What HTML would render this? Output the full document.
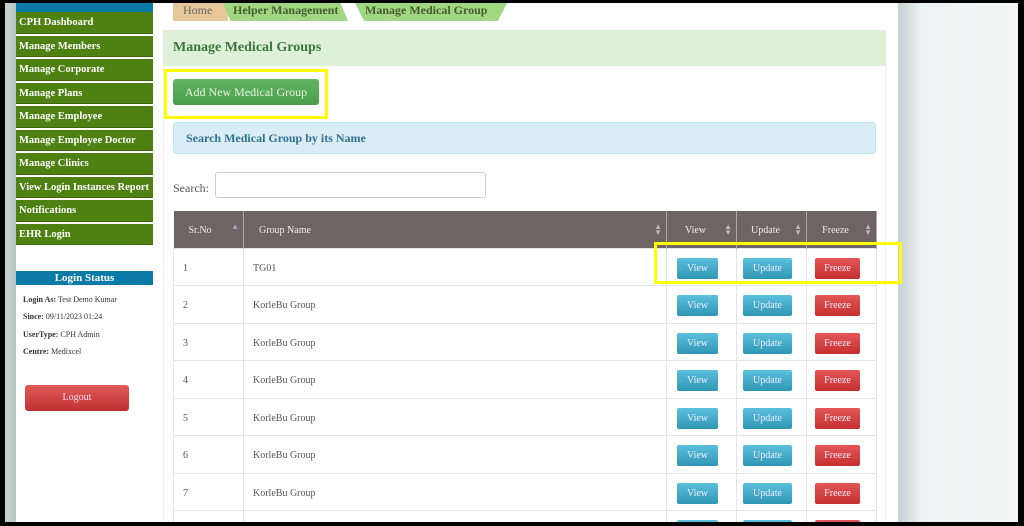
<!DOCTYPE html>
<html><head><style>
*{box-sizing:border-box;margin:0;padding:0}
body{width:1024px;height:526px;background:#000;position:relative;overflow:hidden;font-family:"Liberation Serif",serif}
.page{position:absolute;left:5px;top:3px;width:1013px;height:519px;background:#fff;overflow:hidden}
.lstrip{position:absolute;left:0;top:0;width:11px;height:100%;background:linear-gradient(90deg,#c9d3d3,#b8c6c6)}
.rarea{position:absolute;left:893px;top:0;width:120px;height:100%;background:linear-gradient(90deg,#c5d1d1,#eef1f1 20%,#f4f6f6)}
.sb{position:absolute;left:11px;top:0;width:137px}
.ql{height:9px;background:#0a7ba6}
.sb a{display:block;background:#4f8012;color:#fff;font-weight:bold;font-size:10.5px;height:21.5px;line-height:21px;padding-left:3px;margin-bottom:2px;border-bottom:1px solid #3c650c}
.ls{position:absolute;left:11px;top:268px;width:137px;height:14px;background:#0a7ba6;color:#fff;font-weight:bold;text-align:center;font-size:11px;line-height:14px}
.info{position:absolute;left:18px;font-size:8px;color:#333}
.logout{position:absolute;left:20px;top:382px;width:104px;height:26px;background:linear-gradient(#e05a5a,#c03030);border-radius:3px;color:#fde;text-align:center;font-size:10px;line-height:26px}
.bc{position:absolute;top:0;height:18px;font-weight:bold;font-size:12px;color:#4a5a30;line-height:14px;padding-left:10px}
.panel{position:absolute;left:158px;top:27px;width:723px;height:500px;border:1px solid #eee;border-top:none}
.ph{position:absolute;left:158px;top:27px;width:723px;height:36px;background:#dff0d8;color:#3c763d;font-weight:bold;font-size:14px;line-height:36px;padding-left:10px}
.hl{position:absolute;border:3px solid #ffff00}
.addbtn{position:absolute;left:168px;top:76px;width:146px;height:26px;background:linear-gradient(#62b462,#4a9e4a);border-radius:3px;color:#e8f5e0;font-size:12px;text-align:center;line-height:26px}
.srch{position:absolute;left:168px;top:119px;width:703px;height:32px;background:#d9edf7;border:1px solid #bce8f1;border-radius:3px;color:#31708f;font-weight:bold;font-size:12px;line-height:30px;padding-left:12px}
.sl{position:absolute;left:168px;top:178px;font-size:12px;color:#555}
.si{position:absolute;left:210px;top:169px;width:271px;height:26px;border:1px solid #ccc;border-radius:3px}
table{position:absolute;left:168px;top:208px;border-collapse:collapse;font-size:10px;color:#555}
th{background:#6e6464;color:#eee;font-weight:normal;height:37px;border-right:1px solid #aaa;position:relative;text-align:left;padding-left:15px;padding-top:3px}
th.c{text-align:center;padding-left:0;padding-right:12px}
th .s{position:absolute;right:4px;top:13px;color:#bbb;font-size:8px;line-height:6px}
td{height:37.5px;border:1px solid #e4e4e4;padding-left:9px;padding-top:3px}
td.c{text-align:center;padding:3px 8px 0 0}
.b{display:inline-block;width:41px;height:21px;line-height:21px;color:#eef;border-radius:2px;font-size:10px}
.v{background:linear-gradient(#5bc0de,#2f96b4)}
.u{width:49px}
.f{background:linear-gradient(#e45656,#c53030);width:45px}
</style></head><body><div class="page">
<div class="lstrip"></div><div class="rarea"></div>
<div class="sb"><div class="ql"></div>
<a>CPH Dashboard</a><a>Manage Members</a><a>Manage Corporate</a><a>Manage Plans</a><a>Manage Employee</a><a>Manage Employee Doctor</a><a>Manage Clinics</a><a>View Login Instances Report</a><a>Notifications</a><a>EHR Login</a></div>
<div class="ls">Login Status</div>
<div class="info" style="top:292px"><b>Login As:</b> Test Demo Kumar</div>
<div class="info" style="top:309px"><b>Since:</b> 09/11/2023 01:24</div>
<div class="info" style="top:327px"><b>UserType:</b> CPH Admin</div>
<div class="info" style="top:344px"><b>Centre:</b> Medixcel</div>
<div class="logout">Logout</div>
<div class="bc" style="left:168px;width:55px;background:#e8c89a;font-weight:normal;color:#666">Home</div>
<div class="bc" style="left:218px;width:125px;background:#9fd880;clip-path:polygon(0 0,94% 0,100% 100%,6% 100%)">Helper Management</div>
<div class="bc" style="left:350px;width:152px;background:#9fd880;clip-path:polygon(0 0,96% 0,100% 0,94% 100%,6% 100%)">Manage Medical Group</div>
<div class="panel"></div>
<div class="ph">Manage Medical Groups</div>
<div class="hl" style="left:159px;top:66px;width:164px;height:50px"></div>
<div class="addbtn">Add New Medical Group</div>
<div class="srch">Search Medical Group by its Name</div>
<div class="sl">Search:</div><div class="si"></div>
<table>
<tr><th style="width:70px">Sr.No<span class="s" style="color:#9ac">▲</span></th><th style="width:423px">Group Name<span class="s">▲<br>▼</span></th><th class="c" style="width:70px">View<span class="s">▲<br>▼</span></th><th class="c" style="width:70px">Update<span class="s">▲<br>▼</span></th><th class="c" style="width:70px">Freeze<span class="s">▲<br>▼</span></th></tr>
<tr><td>1</td><td>TG01</td><td class="c"><span class="b v">View</span></td><td class="c"><span class="b v u">Update</span></td><td class="c"><span class="b f">Freeze</span></td></tr>
<tr><td>2</td><td>KorleBu Group</td><td class="c"><span class="b v">View</span></td><td class="c"><span class="b v u">Update</span></td><td class="c"><span class="b f">Freeze</span></td></tr>
<tr><td>3</td><td>KorleBu Group</td><td class="c"><span class="b v">View</span></td><td class="c"><span class="b v u">Update</span></td><td class="c"><span class="b f">Freeze</span></td></tr>
<tr><td>4</td><td>KorleBu Group</td><td class="c"><span class="b v">View</span></td><td class="c"><span class="b v u">Update</span></td><td class="c"><span class="b f">Freeze</span></td></tr>
<tr><td>5</td><td>KorleBu Group</td><td class="c"><span class="b v">View</span></td><td class="c"><span class="b v u">Update</span></td><td class="c"><span class="b f">Freeze</span></td></tr>
<tr><td>6</td><td>KorleBu Group</td><td class="c"><span class="b v">View</span></td><td class="c"><span class="b v u">Update</span></td><td class="c"><span class="b f">Freeze</span></td></tr>
<tr><td>7</td><td>KorleBu Group</td><td class="c"><span class="b v">View</span></td><td class="c"><span class="b v u">Update</span></td><td class="c"><span class="b f">Freeze</span></td></tr>
<tr><td>8</td><td>KorleBu Group</td><td class="c"><span class="b v">View</span></td><td class="c"><span class="b v u">Update</span></td><td class="c"><span class="b f">Freeze</span></td></tr>
</table>
<div class="hl" style="left:649px;top:239px;width:248px;height:42px"></div>
</div></body></html>
